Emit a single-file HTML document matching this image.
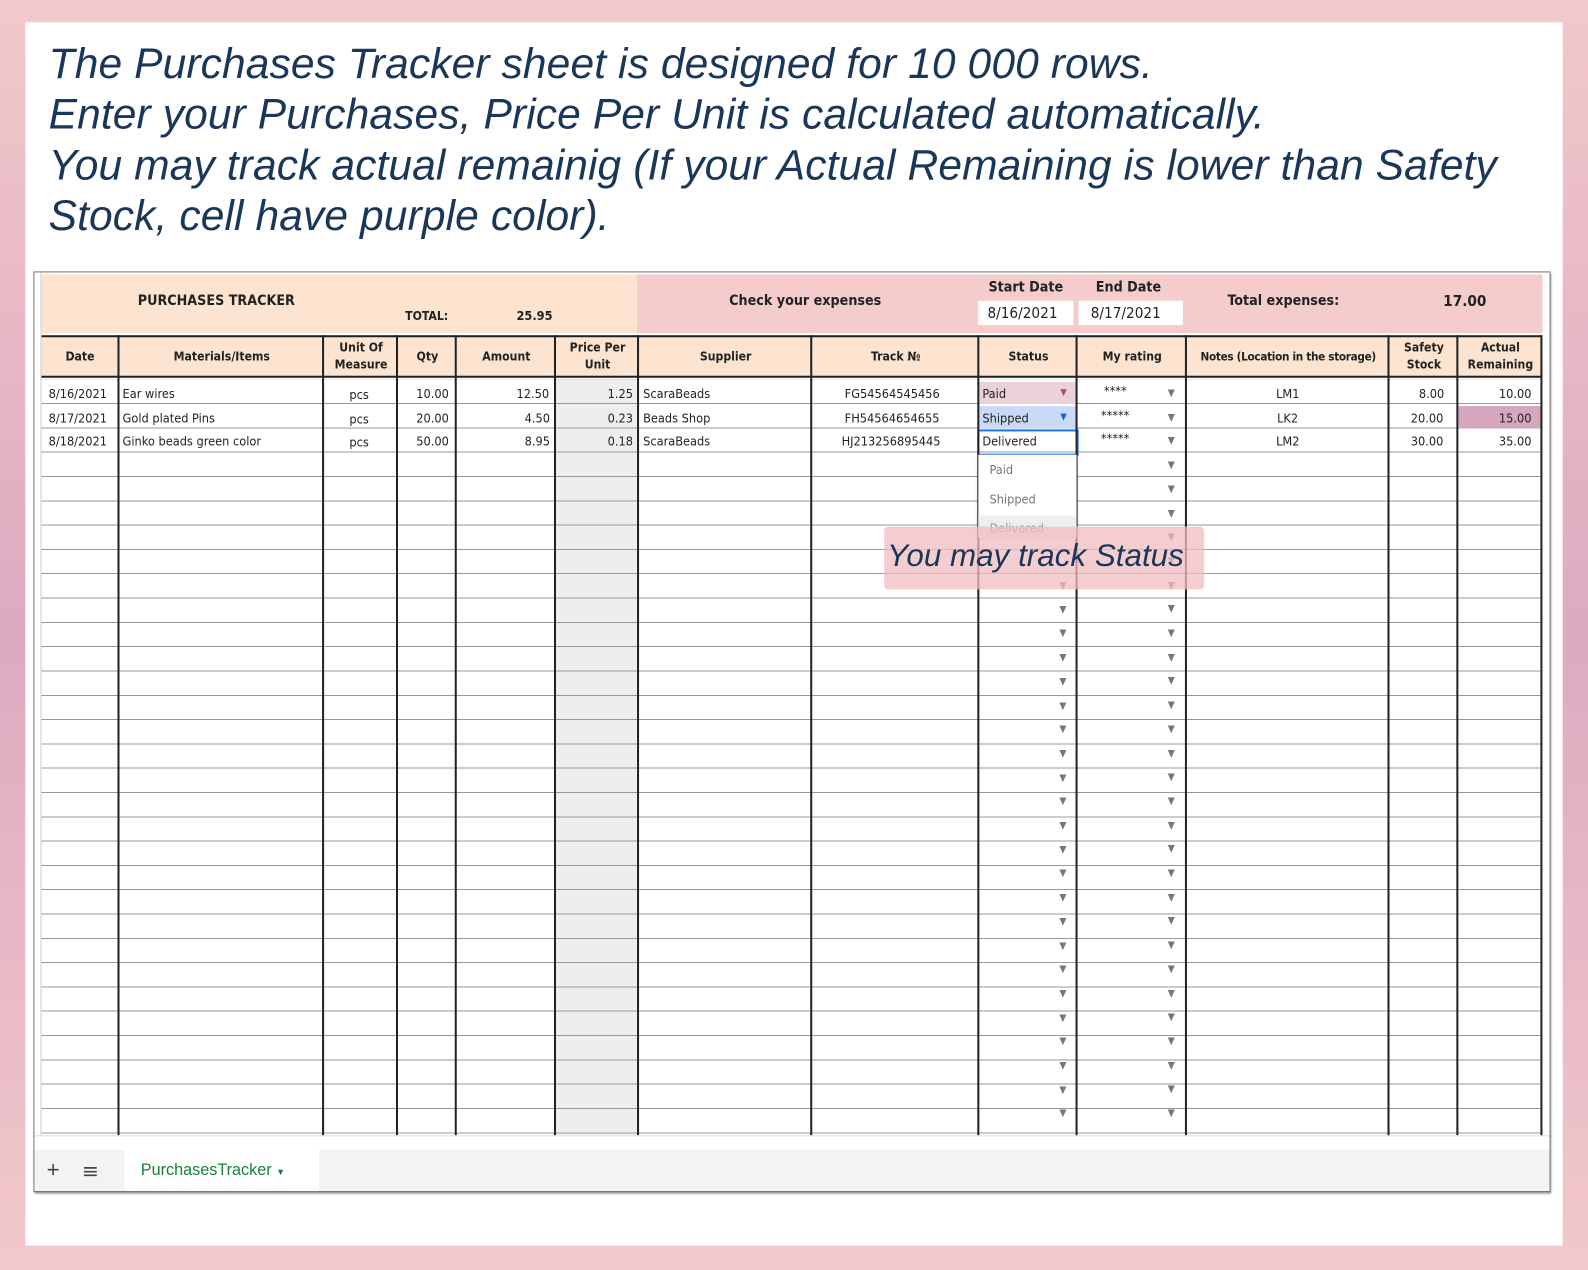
<!DOCTYPE html>
<html><head><meta charset="utf-8">
<style>
html,body{margin:0;padding:0;width:1588px;height:1270px;overflow:hidden;}
body{background:linear-gradient(180deg,#f2c8cb 0%,#dcaac0 50%,#f2c8cb 100%);}
#w{position:absolute;left:0;top:0;width:1568px;height:1254px;transform:scale(1.01276);transform-origin:0 0;font-family:"Liberation Sans Narrow","DejaVu Sans Condensed","Liberation Sans",sans-serif;}
.panel{position:absolute;left:25px;top:22px;width:1518px;height:1208px;background:#fff;}
.topband{position:absolute;left:0;top:0;width:1568px;height:22px;background:#f2c8cb}
.botband{position:absolute;left:0;top:1230px;width:1568px;height:24px;background:#f2c8cb}
.intro{position:absolute;left:48px;top:38px;font-family:"Liberation Sans",sans-serif;font-style:italic;font-size:42px;line-height:50px;color:#1a3658;letter-spacing:0.1px}
.sheet{position:absolute;left:33px;top:268px;width:1496px;height:907px;border:1px solid #777;box-shadow:1px 2px 2px #888;background:#fff;overflow:hidden;}
.a{position:absolute;}
.vl{position:absolute;width:2px;background:#222;}
.t{position:absolute;font-size:12.5px;color:#222;white-space:nowrap;line-height:24px;}
.b{font-weight:bold;}
.hd{position:absolute;font-weight:bold;font-size:12px;color:#222;text-align:center;line-height:17px;display:flex;align-items:center;justify-content:center;white-space:nowrap}
.arr{position:absolute;font-size:10px;color:#777;line-height:23.7px;}
</style></head><body><div id="w">
<div class="topband"></div><div class="botband"></div>
<div class="panel"></div>
<div class="intro">The Purchases Tracker sheet is designed for 10 000 rows.<br>Enter your Purchases, Price Per Unit is calculated automatically.<br>You may track actual remainig (If your Actual Remaining is lower than Safety<br>Stock, cell have purple color).</div>

<div class="sheet">
<div class="a" style="left:7px;top:2px;width:588px;height:58px;background:#fce4d0"></div>
<div class="a" style="left:595px;top:2px;width:894px;height:58px;background:#f4cccc"></div>
<div class="a" style="left:7px;top:62px;width:1482px;height:42px;background:#fce4d0;border-top:2px solid #222;border-bottom:2px solid #222;box-sizing:border-box"></div>
<div class="a" style="left:7px;top:106px;width:1482px;height:746px;background:repeating-linear-gradient(180deg,transparent 0,transparent 23px,#999 23px,#999 24px)"></div>
<div class="a" style="left:514px;top:106px;width:82px;height:746px;background:repeating-linear-gradient(180deg,#eee 0,#eee 23px,#999 23px,#999 24px)"></div>
<div class="a" style="left:933px;top:108px;width:96px;height:22px;background:#ead1dc"></div>
<div class="a" style="left:933px;top:132px;width:96px;height:22px;background:#c9daf8"></div>
<div class="a" style="left:931px;top:155px;width:96px;height:22px;border:2px solid #1a73e8"></div>
<div class="a" style="left:1406px;top:132px;width:83px;height:22px;background:#d5a6bd"></div>
<div class="vl" style="left:82px;top:62px;height:790px"></div>
<div class="vl" style="left:284px;top:62px;height:790px"></div>
<div class="vl" style="left:357px;top:62px;height:790px"></div>
<div class="vl" style="left:415px;top:62px;height:790px"></div>
<div class="vl" style="left:513px;top:62px;height:790px"></div>
<div class="vl" style="left:595px;top:62px;height:790px"></div>
<div class="vl" style="left:766px;top:62px;height:790px"></div>
<div class="vl" style="left:931px;top:62px;height:790px"></div>
<div class="vl" style="left:1028px;top:62px;height:790px"></div>
<div class="vl" style="left:1136px;top:62px;height:790px"></div>
<div class="vl" style="left:1336px;top:62px;height:790px"></div>
<div class="vl" style="left:1404px;top:62px;height:790px"></div>
<div class="vl" style="left:1487px;top:62px;height:790px"></div>
<div class="a" style="left:6px;top:0;width:1px;height:852px;background:#ccc"></div>
<div class="t b" style="left:102px;top:16px;font-size:14px">PURCHASES TRACKER</div>
<div class="t b" style="left:366px;top:31px;font-size:12px">TOTAL:</div>
<div class="t b" style="left:476px;top:31px">25.95</div>
<div class="t b" style="left:686px;top:16px;font-size:14px">Check your expenses</div>
<div class="t b" style="left:942px;top:3px;font-size:14px">Start Date</div>
<div class="t b" style="left:1048px;top:3px;font-size:14px">End Date</div>
<div class="a" style="left:932px;top:28px;width:94px;height:24px;background:#fff"></div>
<div class="a" style="left:1031px;top:28px;width:103px;height:24px;background:#fff"></div>
<div class="t" style="left:941px;top:28px;font-size:15px">8/16/2021</div>
<div class="t" style="left:1043px;top:28px;font-size:15px">8/17/2021</div>
<div class="t b" style="left:1178px;top:16px;font-size:14px">Total expenses:</div>
<div class="t b" style="left:1391px;top:16px;font-size:15px">17.00</div>
<div class="hd" style="left:7px;top:64px;width:76px;height:38px">Date</div>
<div class="hd" style="left:85px;top:64px;width:200px;height:38px">Materials/Items</div>
<div class="hd" style="left:287px;top:64px;width:71px;height:38px">Unit Of<br>Measure</div>
<div class="hd" style="left:360px;top:64px;width:56px;height:38px">Qty</div>
<div class="hd" style="left:418px;top:64px;width:96px;height:38px">Amount</div>
<div class="hd" style="left:516px;top:64px;width:80px;height:38px">Price Per<br>Unit</div>
<div class="hd" style="left:598px;top:64px;width:169px;height:38px">Supplier</div>
<div class="hd" style="left:769px;top:64px;width:163px;height:38px">Track №</div>
<div class="hd" style="left:934px;top:64px;width:95px;height:38px">Status</div>
<div class="hd" style="left:1031px;top:64px;width:106px;height:38px">My rating</div>
<div class="hd" style="left:1139px;top:64px;width:198px;height:38px;font-size:11.5px;letter-spacing:-0.3px">Notes (Location in the storage)</div>
<div class="hd" style="left:1339px;top:64px;width:66px;height:38px">Safety<br>Stock</div>
<div class="hd" style="left:1407px;top:64px;width:81px;height:38px">Actual<br>Remaining</div>
<div class="t" style="left:14px;top:108px">8/16/2021</div>
<div class="t" style="left:14px;top:132px">8/17/2021</div>
<div class="t" style="left:14px;top:155px">8/18/2021</div>
<div class="t" style="left:87px;top:108px">Ear wires</div>
<div class="t" style="left:87px;top:132px">Gold plated Pins</div>
<div class="t" style="left:87px;top:155px">Ginko beads green color</div>
<div class="t" style="left:311px;top:109px">pcs</div>
<div class="t" style="left:311px;top:133px">pcs</div>
<div class="t" style="left:311px;top:156px">pcs</div>
<div class="t" style="left:377px;top:108px">10.00</div>
<div class="t" style="left:377px;top:132px">20.00</div>
<div class="t" style="left:377px;top:155px">50.00</div>
<div class="t" style="left:476px;top:108px">12.50</div>
<div class="t" style="left:484px;top:132px">4.50</div>
<div class="t" style="left:484px;top:155px">8.95</div>
<div class="t" style="left:566px;top:108px">1.25</div>
<div class="t" style="left:566px;top:132px">0.23</div>
<div class="t" style="left:566px;top:155px">0.18</div>
<div class="t" style="left:601px;top:108px">ScaraBeads</div>
<div class="t" style="left:601px;top:132px">Beads Shop</div>
<div class="t" style="left:601px;top:155px">ScaraBeads</div>
<div class="t" style="left:800px;top:108px">FG54564545456</div>
<div class="t" style="left:800px;top:132px">FH54564654655</div>
<div class="t" style="left:797px;top:155px">HJ213256895445</div>
<div class="t" style="left:936px;top:108px">Paid</div>
<div class="t" style="left:936px;top:132px">Shipped</div>
<div class="t" style="left:936px;top:155px">Delivered</div>
<div class="t" style="left:1013px;top:107px;font-size:9px;color:#a05070">▼</div>
<div class="t" style="left:1013px;top:131px;font-size:9px;color:#1a5fd0">▼</div>
<div class="t" style="left:1056px;top:105px">****</div>
<div class="t" style="left:1053px;top:129px">*****</div>
<div class="t" style="left:1053px;top:152px">*****</div>
<div class="t" style="left:1226px;top:108px">LM1</div>
<div class="t" style="left:1227px;top:132px">LK2</div>
<div class="t" style="left:1226px;top:155px">LM2</div>
<div class="t" style="left:1367px;top:108px">8.00</div>
<div class="t" style="left:1359px;top:132px">20.00</div>
<div class="t" style="left:1359px;top:155px">30.00</div>
<div class="t" style="left:1446px;top:108px">10.00</div>
<div class="t" style="left:1446px;top:132px">15.00</div>
<div class="t" style="left:1446px;top:155px">35.00</div>
<div class="arr" style="left:1119px;top:108px">▼<br>▼<br>▼<br>▼<br>▼<br>▼<br>▼<br>▼<br>▼<br>▼<br>▼<br>▼<br>▼<br>▼<br>▼<br>▼<br>▼<br>▼<br>▼<br>▼<br>▼<br>▼<br>▼<br>▼<br>▼<br>▼<br>▼<br>▼<br>▼<br>▼<br>▼</div>
<div class="arr" style="left:1012px;top:298px">▼<br>▼<br>▼<br>▼<br>▼<br>▼<br>▼<br>▼<br>▼<br>▼<br>▼<br>▼<br>▼<br>▼<br>▼<br>▼<br>▼<br>▼<br>▼<br>▼<br>▼<br>▼<br>▼</div>
<div class="a" style="left:932px;top:180px;width:97px;height:80px;background:#fff;box-shadow:0 2px 4px rgba(0,0,0,.3)"></div>
<div class="a" style="left:932px;top:240px;width:97px;height:22px;background:#eee"></div>
<div class="t" style="left:943px;top:183px;color:#777">Paid</div>
<div class="t" style="left:943px;top:212px;color:#777">Shipped</div>
<div class="t" style="left:943px;top:241px;color:#999">Delivered</div>
<div class="a" style="left:839px;top:251px;width:316px;height:62px;background:rgba(240,188,194,.75);border-radius:4px"></div>
<div class="a" style="left:842px;top:262px;font-family:'Liberation Sans',sans-serif;font-style:italic;font-size:31px;color:#1a3658;white-space:nowrap">You may track Status</div>
<div class="a" style="left:0;top:852px;width:1496px;height:15px;background:#fff;border-top:1px solid #ddd"></div>
<div class="a" style="left:0;top:866px;width:1496px;height:41px;background:#f1f3f4"></div>
<div class="a" style="left:89px;top:866px;width:192px;height:41px;background:#fff"></div>
<div class="a" style="left:12px;top:873px;font-size:22px;color:#444;font-family:'Liberation Sans',sans-serif">+</div>
<div class="a" style="left:47px;top:875px;font-size:20px;color:#444;font-family:'DejaVu Sans',sans-serif">≡</div>
<div class="a" style="left:105px;top:878px;font-size:16px;color:#188038;font-family:'Liberation Sans',sans-serif">PurchasesTracker <span style="font-size:9px">▼</span></div>
</div>
</div></body></html>
